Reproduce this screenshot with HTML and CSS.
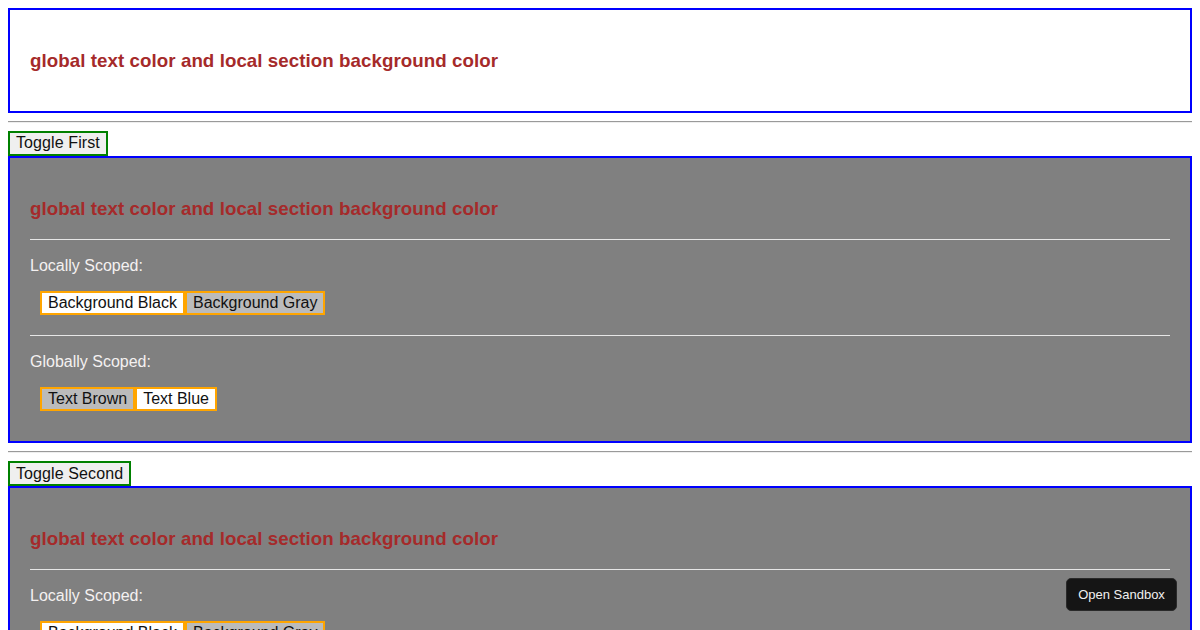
FILE: index.html
```html
<!DOCTYPE html>
<html>
<head>
<meta charset="utf-8">
<link rel="stylesheet" href="styles.css">
</head>
<body>
<section class="panel panel-plain">
  <h3 class="title">global text color and local section background color</h3>
</section>
<hr class="divider">
<button class="toggle">Toggle First</button>
<section class="panel panel-gray">
  <h3 class="title">global text color and local section background color</h3>
  <hr class="inner-rule first-rule">
  <p class="label">Locally Scoped:</p>
  <div class="btn-row">
    <button class="opt opt-white">Background Black</button><button class="opt opt-gray">Background Gray</button>
  </div>
  <hr class="inner-rule">
  <p class="label">Globally Scoped:</p>
  <div class="btn-row">
    <button class="opt opt-gray">Text Brown</button><button class="opt opt-white">Text Blue</button>
  </div>
</section>
<hr class="divider">
<button class="toggle">Toggle Second</button>
<section class="panel panel-gray">
  <h3 class="title">global text color and local section background color</h3>
  <hr class="inner-rule first-rule">
  <p class="label">Locally Scoped:</p>
  <div class="btn-row">
    <button class="opt opt-white">Background Black</button><button class="opt opt-gray">Background Gray</button>
  </div>
  <hr class="inner-rule">
  <p class="label">Globally Scoped:</p>
  <div class="btn-row">
    <button class="opt opt-gray">Text Brown</button><button class="opt opt-white">Text Blue</button>
  </div>
</section>
<button class="sandbox">Open Sandbox</button>
</body>
</html>
```
FILE: styles.css
```css
body {
  margin: 8px;
  font-family: "Liberation Sans", Arial, sans-serif;
  font-size: 16px;
  background: #fff;
}

.panel {
  border: 2px solid #0000ff;
  padding: 20px;
}

.panel-plain {
  background: #fff;
}

.panel-gray {
  background: #808080;
}

.title {
  font-size: 18.72px;
  line-height: 23.5px;
  font-weight: bold;
  color: #a52a2a;
  margin: 18.72px 0;
  letter-spacing: 0.07px;
}

.divider {
  margin: 8px 0;
  border: none;
  border-top: 1px solid #9a9a9a;
  border-bottom: 1px solid #eeeeee;
  height: 0;
}

.inner-rule {
  margin: 10px 0;
  border: none;
  border-top: 1px solid #e6e6e6;
  height: 0;
}

.first-rule {
  margin-top: 19px;
  margin-bottom: 11px;
}

.label {
  color: #f4f1f1;
  margin: 17px 0 16px;
  font-size: 16px;
}

.btn-row {
  padding: 0 0 10px 10px;
  display: flex;
}

.toggle {
  display: block;
  font-family: "Liberation Sans", Arial, sans-serif;
  font-size: 16px;
  color: #111;
  background: #efefef;
  border: 2px solid #008000;
  padding: 1px 6px;
  margin: 0;
  height: 25px;
  letter-spacing: 0.1px;
}

.opt {
  font-family: "Liberation Sans", Arial, sans-serif;
  font-size: 16px;
  color: #111;
  border: 2px solid #ffa500;
  padding: 1px 6px;
  margin: 0;
  height: 24px;
}

.opt-white {
  background: #fff;
}

.opt-gray {
  background: #bbbbbb;
}

.sandbox {
  position: fixed;
  right: 23px;
  bottom: 19px;
  width: 111px;
  height: 33px;
  background: #151515;
  color: #f0f0f0;
  border: 1px solid #2a2a2a;
  border-radius: 5px;
  font-family: "Liberation Sans", Arial, sans-serif;
  font-size: 13px;
  padding: 0;
}
```
